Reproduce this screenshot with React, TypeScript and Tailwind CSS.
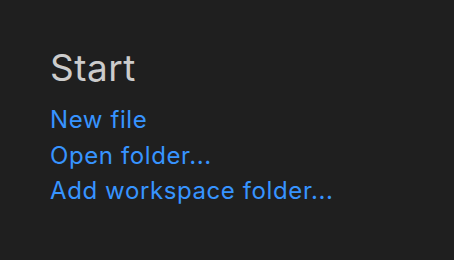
import React from 'react';

const links = ['New file', 'Open folder...', 'Add workspace folder...'];

const App: React.FC = () => {
  return (
    <div className="w-[454px] h-[260px] bg-[#1f1f1f] pt-[46px] pl-[50px]" style={{ fontFamily: 'Inter, "Noto Sans", sans-serif' }}>
      <h2 className="text-[37px] leading-[44px] tracking-[0.5px] text-[#cccccc] font-normal">Start</h2>
      <div className="flex flex-col mt-[12px]">
        {links.map((l) => (
          <a key={l} className="text-[24px] leading-[35.5px] tracking-[0.6px] text-[#3794ff] cursor-pointer">
            {l}
          </a>
        ))}
      </div>
    </div>
  );
};

export default App;
